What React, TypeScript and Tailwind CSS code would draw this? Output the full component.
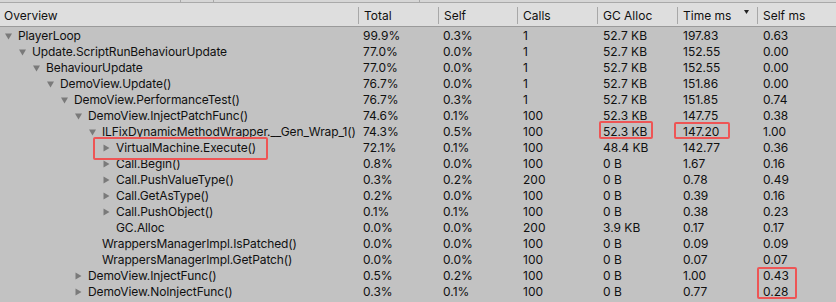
import React from "react";

type Row = {
  name: string;
  depth: number;
  arrow: "down" | "right" | null;
  total: string;
  self: string;
  calls: string;
  gc: string;
  time: string;
  selfMs: string;
};

const rows: Row[] = [
  { name: "PlayerLoop", depth: 0, arrow: "down", total: "99.9%", self: "0.3%", calls: "1", gc: "52.7 KB", time: "197.83", selfMs: "0.63" },
  { name: "Update.ScriptRunBehaviourUpdate", depth: 1, arrow: "down", total: "77.0%", self: "0.0%", calls: "1", gc: "52.7 KB", time: "152.55", selfMs: "0.00" },
  { name: "BehaviourUpdate", depth: 2, arrow: "down", total: "77.0%", self: "0.0%", calls: "1", gc: "52.7 KB", time: "152.55", selfMs: "0.00" },
  { name: "DemoView.Update()", depth: 3, arrow: "down", total: "76.7%", self: "0.0%", calls: "1", gc: "52.7 KB", time: "151.86", selfMs: "0.00" },
  { name: "DemoView.PerformanceTest()", depth: 4, arrow: "down", total: "76.7%", self: "0.3%", calls: "1", gc: "52.7 KB", time: "151.85", selfMs: "0.74" },
  { name: "DemoView.InjectPatchFunc()", depth: 5, arrow: "down", total: "74.6%", self: "0.1%", calls: "100", gc: "52.3 KB", time: "147.75", selfMs: "0.38" },
  { name: "ILFixDynamicMethodWrapper.__Gen_Wrap_1()", depth: 6, arrow: "down", total: "74.3%", self: "0.5%", calls: "100", gc: "52.3 KB", time: "147.20", selfMs: "1.00" },
  { name: "VirtualMachine.Execute()", depth: 7, arrow: "right", total: "72.1%", self: "0.1%", calls: "100", gc: "48.4 KB", time: "142.77", selfMs: "0.36" },
  { name: "Call.Begin()", depth: 7, arrow: "right", total: "0.8%", self: "0.0%", calls: "100", gc: "0 B", time: "1.67", selfMs: "0.16" },
  { name: "Call.PushValueType()", depth: 7, arrow: "right", total: "0.3%", self: "0.2%", calls: "200", gc: "0 B", time: "0.78", selfMs: "0.49" },
  { name: "Call.GetAsType()", depth: 7, arrow: "right", total: "0.2%", self: "0.0%", calls: "100", gc: "0 B", time: "0.39", selfMs: "0.16" },
  { name: "Call.PushObject()", depth: 7, arrow: "right", total: "0.1%", self: "0.1%", calls: "100", gc: "0 B", time: "0.38", selfMs: "0.23" },
  { name: "GC.Alloc", depth: 7, arrow: null, total: "0.0%", self: "0.0%", calls: "200", gc: "3.9 KB", time: "0.17", selfMs: "0.17" },
  { name: "WrappersManagerImpl.IsPatched()", depth: 6, arrow: null, total: "0.0%", self: "0.0%", calls: "100", gc: "0 B", time: "0.09", selfMs: "0.09" },
  { name: "WrappersManagerImpl.GetPatch()", depth: 6, arrow: null, total: "0.0%", self: "0.0%", calls: "100", gc: "0 B", time: "0.07", selfMs: "0.07" },
  { name: "DemoView.InjectFunc()", depth: 5, arrow: "right", total: "0.5%", self: "0.2%", calls: "100", gc: "0 B", time: "1.00", selfMs: "0.43" },
  { name: "DemoView.NoInjectFunc()", depth: 5, arrow: "right", total: "0.3%", self: "0.1%", calls: "100", gc: "0 B", time: "0.77", selfMs: "0.28" },
];

const cols = "grid grid-cols-[358px_80px_79px_80px_80px_80px_1fr]";

const Arrow = ({ dir }: { dir: "down" | "right" }) =>
  dir === "down" ? (
    <svg width="9" height="8" viewBox="0 0 9 8" className="shrink-0">
      <path d="M1 1.5 H8 L4.5 7.5 Z" fill="#7a7a7a" />
    </svg>
  ) : (
    <svg width="9" height="8" viewBox="0 0 9 8" className="shrink-0">
      <path d="M1.5 0.5 V7.5 L7.5 4 Z" fill="#7a7a7a" />
    </svg>
  );

const HeaderCell = ({ label, first, sorted }: { label: string; first?: boolean; sorted?: boolean }) => (
  <div className="relative flex items-center h-full pt-[2px]">
    {!first && <div className="absolute left-0 top-[4px] h-[17px] w-px bg-[#a8a8a8]" />}
    <span className={first ? "pl-[4px]" : "pl-[6px]"}>{label}</span>
    {sorted && (
      <svg width="5" height="4" viewBox="0 0 5 4" className="absolute right-[8px] top-[7px]">
        <path d="M0 0 H5 L2.5 4 Z" fill="#222" />
      </svg>
    )}
  </div>
);

export default function App() {
  return (
    <div
      className="relative w-[836px] h-[302px] overflow-hidden bg-[#c2c2c2] text-[12px] text-[#101010]"
      style={{ fontFamily: "Inter, 'Noto Sans', sans-serif" }}
    >
      {/* top strip */}
      <div className="relative h-[3px] bg-[#d6d6d6] border-b border-[#a9a9a9]">
        <div className="absolute left-[180px] top-0 h-full w-px bg-[#a9a9a9]" />
        <div className="absolute left-[213px] top-0 h-full w-px bg-[#a9a9a9]" />
        <div className="absolute left-[419px] top-0 h-full w-px bg-[#a9a9a9]" />
      </div>

      {/* header */}
      <div className={`${cols} h-[24px] bg-[#dedede] border-b border-[#9a9a9a]`}>
        <HeaderCell label="Overview" first />
        <HeaderCell label="Total" />
        <HeaderCell label="Self" />
        <HeaderCell label="Calls" />
        <HeaderCell label="GC Alloc" />
        <HeaderCell label="Time ms" sorted />
        <HeaderCell label="Self ms" />
      </div>

      {/* rows */}
      <div>
        {rows.map((r) => (
          <div key={r.name} className={`${cols} h-[16px] leading-[18px]`}>
            <div className="flex items-start whitespace-nowrap" style={{ paddingLeft: 4 + r.depth * 14 }}>
              <span className="w-[14px] h-[16px] flex items-center pt-[2px]">{r.arrow && <Arrow dir={r.arrow} />}</span>
              <span className="tracking-[-0.1px]">{r.name}</span>
            </div>
            <div className="pl-[5px]">{r.total}</div>
            <div className="pl-[5px]">{r.self}</div>
            <div className="pl-[6px]">{r.calls}</div>
            <div className="pl-[6px]">{r.gc}</div>
            <div className="pl-[6px]">{r.time}</div>
            <div className="pl-[6px]">{r.selfMs}</div>
          </div>
        ))}
      </div>

      {/* annotation boxes */}
      <div className="absolute left-[93px] top-[137px] w-[175px] h-[23px] border-2 border-[#ee5555] rounded-[2px]" />
      <div className="absolute left-[599px] top-[121px] w-[54px] h-[18px] border-2 border-[#ee5555] rounded-[2px]" />
      <div className="absolute left-[674px] top-[122px] w-[56px] h-[17px] border-2 border-[#ee5555] rounded-[2px]" />
      <div className="absolute left-[757px] top-[267px] w-[40px] h-[32px] border-2 border-[#ee5555] rounded-[2px]" />
    </div>
  );
}
